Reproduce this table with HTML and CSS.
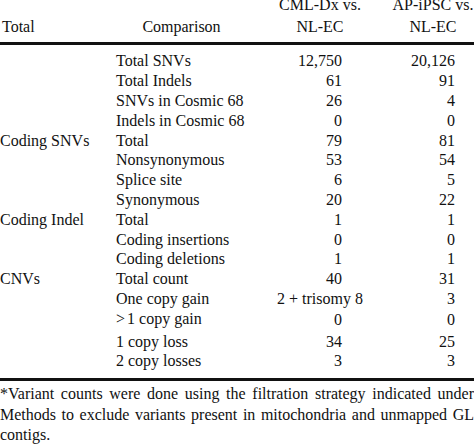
FILE: index.html
```html
<!DOCTYPE html>
<html lang="en">
<head>
<meta charset="utf-8">
<title>Variant counts</title>
<link rel="stylesheet" href="styles.css">
</head>
<body>
<div class="page">
  <table class="vt">
    <colgroup>
      <col class="c-total">
      <col class="c-comp">
      <col class="c-cml">
      <col class="c-ap">
    </colgroup>
    <thead>
      <tr>
        <th class="h-total">Total</th>
        <th class="h-comp">Comparison</th>
        <th class="h-cml">CML-Dx vs.<br>NL-EC</th>
        <th class="h-ap">AP-iPSC vs.<br>NL-EC</th>
      </tr>
    </thead>
    <tbody>
      <tr class="first"><td></td><td>Total SNVs</td><td class="n1">12,750</td><td class="n2">20,126</td></tr>
      <tr><td></td><td>Total Indels</td><td class="n1">61</td><td class="n2">91</td></tr>
      <tr><td></td><td>SNVs in Cosmic 68</td><td class="n1">26</td><td class="n2">4</td></tr>
      <tr><td></td><td>Indels in Cosmic 68</td><td class="n1">0</td><td class="n2">0</td></tr>
      <tr><td class="grp">Coding SNVs</td><td>Total</td><td class="n1">79</td><td class="n2">81</td></tr>
      <tr><td></td><td>Nonsynonymous</td><td class="n1">53</td><td class="n2">54</td></tr>
      <tr><td></td><td>Splice site</td><td class="n1">6</td><td class="n2">5</td></tr>
      <tr><td></td><td>Synonymous</td><td class="n1">20</td><td class="n2">22</td></tr>
      <tr><td class="grp">Coding Indel</td><td>Total</td><td class="n1">1</td><td class="n2">1</td></tr>
      <tr><td></td><td>Coding insertions</td><td class="n1">0</td><td class="n2">0</td></tr>
      <tr><td></td><td>Coding deletions</td><td class="n1">1</td><td class="n2">1</td></tr>
      <tr><td class="grp">CNVs</td><td>Total count</td><td class="n1">40</td><td class="n2">31</td></tr>
      <tr><td></td><td>One copy gain</td><td class="n1 mid">2 + trisomy 8</td><td class="n2">3</td></tr>
      <tr><td></td><td>&gt;<span class="thin"> </span>1 copy gain</td><td class="n1">0</td><td class="n2">0</td></tr>
      <tr><td></td><td>1 copy loss</td><td class="n1">34</td><td class="n2">25</td></tr>
      <tr class="last"><td></td><td>2 copy losses</td><td class="n1">3</td><td class="n2">3</td></tr>
    </tbody>
  </table>
  <p class="note">*Variant counts were done using the filtration strategy indicated under Methods to exclude variants present in mitochondria and unmapped GL contigs.</p>
</div>
</body>
</html>
```

FILE: styles.css
```css
html, body {
  margin: 0;
  padding: 0;
  background: #ffffff;
}

body {
  width: 474px;
  height: 444px;
  overflow: hidden;
  font-family: "Liberation Serif", "Times New Roman", serif;
  font-size: 16px;
  color: #111111;
}

.page {
  width: 474px;
}

.vt {
  width: 474px;
  table-layout: fixed;
  border-collapse: collapse;
  margin-top: -6px;
}

.c-total { width: 116px; }
.c-comp { width: 156px; }
.c-cml { width: 96px; }
.c-ap { width: 106px; }

.vt th {
  font-weight: normal;
  line-height: 21.7px;
  padding: 0 0 5px 0;
  vertical-align: bottom;
  border-bottom: 3px solid #111111;
  white-space: nowrap;
}

.h-total {
  text-align: left;
  padding-left: 2px !important;
}

.h-comp {
  text-align: center;
  padding-right: 25px !important;
}

.h-cml {
  text-align: center;
}

.h-ap {
  text-align: center;
  padding-left: 24px !important;
}

.vt td {
  line-height: 19.8px;
  padding: 0;
  white-space: nowrap;
  text-align: left;
}

.vt td.grp {
  padding-left: 0;
}

.vt td.n1 {
  text-align: right;
  padding-right: 26px;
}

.vt td.n2 {
  text-align: right;
  padding-right: 19px;
}

.vt td.mid {
  text-align: center;
  padding-right: 0;
}

.thin {
  font-size: 8px;
}

.vt tr.first td {
  padding-top: 6px;
}

.vt tr.last td {
  padding-bottom: 7px;
  border-bottom: 3px solid #111111;
}

.note {
  margin: 3px 0 0 0;
  line-height: 20.5px;
  text-align: justify;
}
```
